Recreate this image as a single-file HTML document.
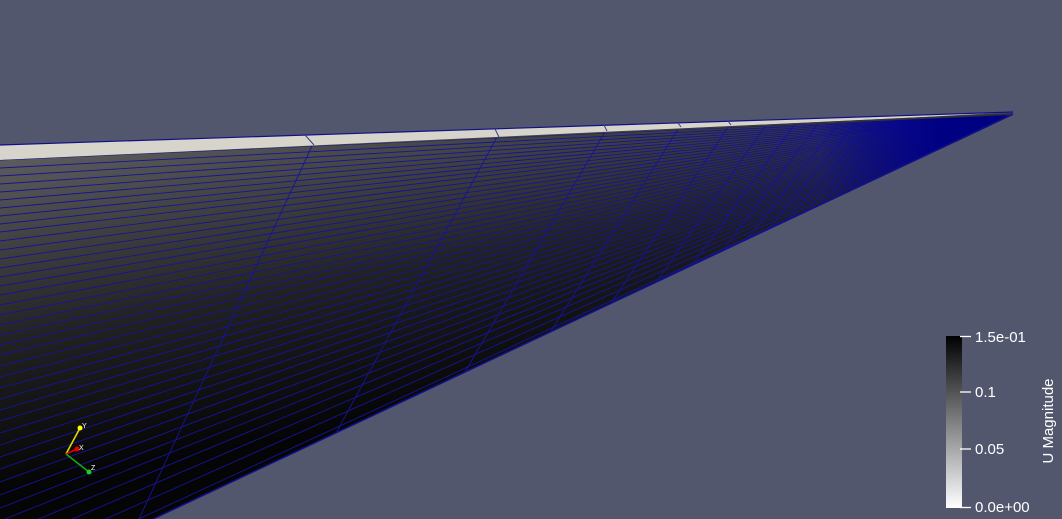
<!DOCTYPE html>
<html><head><meta charset="utf-8"><style>
html,body{margin:0;padding:0;background:#52576e;width:1062px;height:519px;overflow:hidden}
svg{display:block;overflow:hidden}
text{font-family:"Liberation Sans","DejaVu Sans",sans-serif;fill:#fff}
</style></head><body>
<svg width="1062" height="519" viewBox="0 0 1062 519" xmlns="http://www.w3.org/2000/svg">
<defs>
<linearGradient id="sg" gradientUnits="userSpaceOnUse" x1="0" y1="160" x2="60" y2="480">
<stop offset="0" stop-color="#5c5c5c"/><stop offset="0.55" stop-color="#222"/><stop offset="1" stop-color="#050505"/>
</linearGradient>
<linearGradient id="tg" gradientUnits="userSpaceOnUse" x1="820" y1="0" x2="940" y2="0">
<stop offset="0" stop-color="#000080" stop-opacity="0"/><stop offset="1" stop-color="#000082" stop-opacity="1"/>
</linearGradient>
<linearGradient id="lg" x1="0" y1="0" x2="0" y2="1">
<stop offset="0" stop-color="#000"/><stop offset="1" stop-color="#fff"/>
</linearGradient>
<clipPath id="cp"><polygon points="0,160 1013,115 153,519 0,519"/></clipPath>
</defs>
<rect width="1062" height="519" fill="#52576e"/>
<!-- top band -->
<polygon points="0,145 1013,112 925,117 0,161" fill="#d6d4cb"/>
<line x1="0" y1="145" x2="1013" y2="112" stroke="#10108a" stroke-width="1.2"/>
<!-- surface -->
<polygon points="0,160 925,117 1013,113 153,519 0,519" fill="url(#sg)"/>
<g clip-path="url(#cp)" stroke="#14149a" stroke-width="0.9" fill="none">
<path d="M0,160L1013,115M0,168L1013,115M0,176L1013,115M0,184L1013,115M0,192L1013,115M0,200L1013,115M0,208L1013,115M0,216L1013,115M0,224L1013,115M0,232L1013,115M0,241L1013,115M0,250L1013,115M0,259L1013,115M0,268L1013,115M0,277L1013,115M0,286L1013,115M0,295L1013,115M0,305L1013,115M0,315L1013,115M0,325L1013,115M0,335L1013,115M0,345L1013,115M0,355L1013,115M0,366L1013,115M0,377L1013,115M0,388L1013,115M0,399L1013,115M0,410L1013,115M0,421L1013,115M0,433L1013,115M0,445L1013,115M0,457L1013,115M0,469L1013,115M0,482L1013,115M0,495L1013,115M0,508L1013,115M0,521L1013,115M0,535L1013,115M0,550L1013,115M0,566L1013,115M0,583L1013,115M0,600L1013,115"/>
<path d="M312,146L139,519M497,137L335,435M606,130L465,372M680,126L548,336M730,124L610,305M768,122L655,284M797,121L690,268M821,120L720,254M842,119L745,242M860,118L766,232M876,118L785,223M890,117L802,216M903,117L817,209M915,116L830,203M926,116L843,197M936,116L854,192M946,116L865,187M955,115L875,182M964,115L884,178M972,115L893,174M980,115L902,170M988,115L911,166M996,115L920,162M1004,115L930,157"/>
<polygon points="800,118 1013,112 900,180 800,230" fill="url(#tg)" stroke="none"/>
</g>
<line x1="1013" y1="114" x2="153" y2="519" stroke="#10108f" stroke-width="1.5"/>
<!-- band dividers -->
<g stroke="#3a3a90" stroke-width="1">
<line x1="305" y1="135" x2="314" y2="145"/><line x1="495" y1="129" x2="499" y2="137"/><line x1="604" y1="125" x2="607" y2="131"/><line x1="678" y1="123" x2="681" y2="127"/><line x1="728" y1="121" x2="731" y2="125"/>
</g>
<!-- axes -->
<g stroke-width="1.6">
<line x1="66" y1="454" x2="80" y2="428" stroke="#e0d800"/>
<line x1="66" y1="454" x2="77" y2="449" stroke="#d00"/>
<line x1="66" y1="454" x2="89" y2="472" stroke="#1a1"/>
</g>
<circle cx="80" cy="428" r="2.5" fill="#ff0"/><circle cx="77" cy="449" r="2.5" fill="#e00"/><circle cx="89" cy="472" r="2.5" fill="#2c2"/>
<text x="82" y="428" font-size="7">Y</text><text x="79" y="450" font-size="7">X</text><text x="91" y="470" font-size="7">Z</text>
<!-- legend -->
<rect x="946" y="336" width="16" height="172" fill="url(#lg)"/>
<g stroke="#fff" stroke-width="1.3">
<line x1="960" y1="336.5" x2="971" y2="336.5"/><line x1="960" y1="392" x2="971" y2="392"/><line x1="960" y1="449" x2="971" y2="449"/><line x1="960" y1="507.5" x2="971" y2="507.5"/>
</g>
<g font-size="15">
<text x="975" y="342">1.5e-01</text><text x="975" y="397">0.1</text><text x="975" y="454">0.05</text><text x="975" y="512">0.0e+00</text>
</g>
<text transform="translate(1053,421) rotate(-90)" text-anchor="middle" font-size="15">U Magnitude</text>
</svg>
</body></html>
